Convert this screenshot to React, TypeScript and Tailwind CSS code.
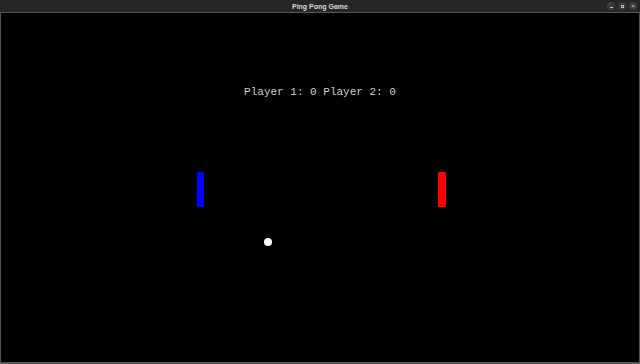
export default function App() {
    return (
        <div className="flex h-[364px] w-[640px] flex-col bg-[#242424]" style={{ fontFamily: '"Liberation Sans", sans-serif' }}>
            {/* window title bar */}
            <div className="relative flex h-[12px] shrink-0 items-center justify-center bg-[#262626]">
                <span className="text-[7px] font-bold leading-none text-[#d8d8d8]">Ping Pong Game</span>
                <div className="absolute right-[3px] top-[2px] flex items-center gap-[3px]">
                    <span className="flex h-[8px] w-[8px] items-center justify-center rounded-full bg-[#3c3c3c]">
                        <span className="mt-[2px] h-px w-[3px] bg-[#bdbdbd]" />
                    </span>
                    <span className="flex h-[8px] w-[8px] items-center justify-center rounded-full bg-[#3c3c3c]">
                        <span className="h-[3px] w-[3px] border border-[#bdbdbd]" />
                    </span>
                    <span className="flex h-[8px] w-[8px] items-center justify-center rounded-full bg-[#3c3c3c] text-[6px] leading-none text-[#d0d0d0]">
                        ×
                    </span>
                </div>
            </div>

            {/* game canvas */}
            <div className="relative flex-1 border-x border-t border-b-2 border-[#555555] bg-black">
                <p
                    className="pt-[73px] text-center text-[11px] leading-[13px] text-[#cfcfcf]"
                    style={{ fontFamily: '"Liberation Mono", "Courier New", monospace' }}
                >
                    Player 1: 0 Player 2: 0
                </p>
                <div className="absolute left-[196px] top-[159px] h-[35px] w-[7px] bg-[#0000ff]" />
                <div className="absolute left-[437px] top-[159px] h-[35px] w-[8px] bg-[#ff0000]" />
                <div className="absolute left-[263px] top-[225px] h-[8px] w-[8px] rounded-full bg-white" />
            </div>
        </div>
    )
}
